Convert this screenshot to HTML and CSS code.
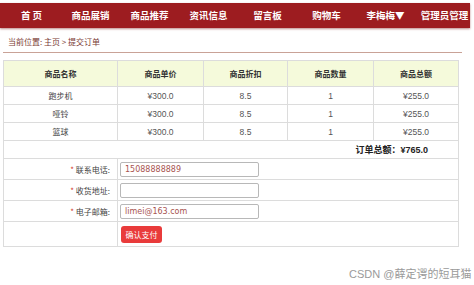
FILE: index.html
```html
<!DOCTYPE html>
<html lang="zh">
<head>
    <meta charset="UTF-8">
    <meta name="viewport" content="width=device-width, initial-scale=1.0">
    <title>提交订单</title>
    <link rel="stylesheet" href="styles.css">
</head>
<body>
    <!-- 导航 -->
    <ul class="nav">
        <li>首 页</li>
        <li>商品展销</li>
        <li>商品推荐</li>
        <li>资讯信息</li>
        <li>留言板</li>
        <li>购物车</li>
        <li>李梅梅▼</li>
        <li>管理员管理</li>
    </ul>

    <div class="crumb">当前位置: 主页 &gt; 提交订单</div>

    <!-- 订单 -->
    <table class="order">
        <tr class="head">
            <th class="c1">商品名称</th>
            <th class="c2">商品单价</th>
            <th class="c3">商品折扣</th>
            <th class="c4">商品数量</th>
            <th class="c5">商品总额</th>
        </tr>
        <tr class="item">
            <td class="name">跑步机</td><td>¥300.0</td><td>8.5</td><td>1</td><td>¥255.0</td>
        </tr>
        <tr class="item">
            <td class="name">哑铃</td><td>¥300.0</td><td>8.5</td><td>1</td><td>¥255.0</td>
        </tr>
        <tr class="item">
            <td class="name">篮球</td><td>¥300.0</td><td>8.5</td><td>1</td><td>¥255.0</td>
        </tr>
        <tr class="total">
            <td colspan="5">订单总额：¥765.0</td>
        </tr>
        <tr class="field">
            <td class="label"><span class="star">*</span> 联系电话:</td>
            <td colspan="4"><input type="text" value="15088888889"></td>
        </tr>
        <tr class="field">
            <td class="label"><span class="star">*</span> 收货地址:</td>
            <td colspan="4"><input type="text" value=""></td>
        </tr>
        <tr class="field">
            <td class="label"><span class="star">*</span> 电子邮箱:</td>
            <td colspan="4"><input type="text" value="limei@163.com"></td>
        </tr>
        <tr class="submit">
            <td></td>
            <td colspan="4"><button type="button">确认支付</button></td>
        </tr>
    </table>

    <div class="mark">CSDN @薛定谔的短耳猫</div>
</body>
</html>
```

FILE: styles.css
```css
body {
    margin: 0;
    font-family: "Liberation Sans", "Noto Sans CJK SC", sans-serif;
    background: #fff;
    color: #333;
    position: relative;
    height: 285px;
    overflow: hidden;
}
.nav {
    list-style: none;
    margin: 3px 0 0;
    padding: 0 0 0 2px;
    width: 468px;
    height: 25px;
    display: flex;
    background: #9d1c20;
    box-shadow: 0 1px 2px rgba(120, 20, 20, 0.5);
}
.nav li {
    width: 59px;
    flex: none;
    text-align: center;
    line-height: 25px;
    color: #fff;
    font-size: 9.5px;
    font-weight: bold;
    font-family: "Noto Sans CJK SC", sans-serif;
}
.crumb {
    margin: 0 0 0 3px;
    width: 459px;
    padding: 9px 0 0 5px;
    box-sizing: border-box;
    height: 25px;
    font-size: 8px;
    line-height: 10px;
    color: #7a3a34;
    font-family: "Noto Sans CJK SC", sans-serif;
    border-bottom: 1px solid #c9a297;
}
.order {
    margin: 7px 0 0 3px;
    width: 455px;
    border-collapse: collapse;
    font-size: 8.5px;
    table-layout: fixed;
}
.order td, .order th {
    border: 1px solid #dcdcdc;
    text-align: center;
    padding: 0;
    color: #555;
}
.order th {
    font-weight: bold;
    font-size: 8px;
    color: #333;
    font-family: "Noto Sans CJK SC", sans-serif;
}
.order .name {
    font-size: 8px;
    color: #444;
    font-family: "Noto Sans CJK SC", sans-serif;
}
.c1 { width: 113px; }
.c2 { width: 85px; }
.c3 { width: 83px; }
.c4 { width: 85px; }
.c5 { width: 84px; }
.head {
    background: #f5fadb;
    height: 26px;
}
.item {
    height: 18px;
}
.total {
    height: 18px;
}
.order .total td {
    text-align: right;
    padding-right: 30px;
    font-weight: bold;
    color: #222;
    font-size: 9px;
}
.field {
    height: 21px;
}
.order .label {
    text-align: right;
    padding-right: 7px;
    font-size: 8px;
    color: #444;
    font-family: "Noto Sans CJK SC", sans-serif;
}
.star {
    color: #d23a2a;
}
.order .field td, .order .submit td {
    text-align: left;
}
.order .field .label {
    text-align: right;
}
input {
    display: block;
    margin-left: 2px;
    width: 139px;
    height: 15px;
    box-sizing: border-box;
    border: 1px solid #b8b8b8;
    border-radius: 2px;
    padding: 0 4px;
    font-family: "DejaVu Sans", sans-serif;
    font-size: 8px;
    color: #a85450;
}
.submit {
    height: 25px;
}
button {
    display: block;
    margin-left: 3px;
    width: 41px;
    height: 17px;
    padding: 0;
    border: none;
    border-radius: 3px;
    background: #e93b3b;
    color: #fff;
    font-size: 8px;
    font-family: "Noto Sans CJK SC", sans-serif;
    cursor: pointer;
}
.mark {
    position: absolute;
    left: 349px;
    top: 265px;
    font-size: 11px;
    color: #9a9a9a;
    white-space: nowrap;
    font-family: "Liberation Sans", "Noto Sans CJK SC", sans-serif;
}
```
